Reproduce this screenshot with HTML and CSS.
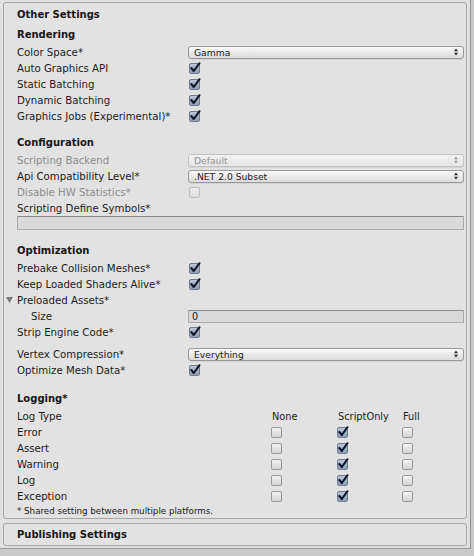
FILE: index.html
```html
<!DOCTYPE html>
<html>
<head>
<meta charset="utf-8">
<link rel="stylesheet" href="styles.css">
</head>
<body>
<div class="window">
  <section class="box other">
    <div class="row head">Other Settings</div>

    <div class="row head sec">Rendering</div>
    <div class="row"><span class="label">Color Space*</span><div class="ctrl"><div class="popup"><span>Gamma</span><svg class="arr" viewBox="0 0 4 8" width="4" height="8"><path d="M0 3.2 L2 0.5 L4 3.2Z M0 4.8 L2 7.5 L4 4.8Z"/></svg></div></div></div>
    <div class="row"><span class="label">Auto Graphics API</span><div class="ctrl"><span class="cb on"><svg viewBox="0 0 12 12"><path d="M2.3 6 L4.8 9 L10.5 1.2"/></svg></span></div></div>
    <div class="row"><span class="label">Static Batching</span><div class="ctrl"><span class="cb on"><svg viewBox="0 0 12 12"><path d="M2.3 6 L4.8 9 L10.5 1.2"/></svg></span></div></div>
    <div class="row"><span class="label">Dynamic Batching</span><div class="ctrl"><span class="cb on"><svg viewBox="0 0 12 12"><path d="M2.3 6 L4.8 9 L10.5 1.2"/></svg></span></div></div>
    <div class="row"><span class="label">Graphics Jobs (Experimental)*</span><div class="ctrl"><span class="cb on"><svg viewBox="0 0 12 12"><path d="M2.3 6 L4.8 9 L10.5 1.2"/></svg></span></div></div>

    <div class="row head sec config">Configuration</div>
    <div class="row disabled"><span class="label">Scripting Backend</span><div class="ctrl"><div class="popup off"><span>Default</span><svg class="arr" viewBox="0 0 4 8" width="4" height="8"><path d="M0 3.2 L2 0.5 L4 3.2Z M0 4.8 L2 7.5 L4 4.8Z"/></svg></div></div></div>
    <div class="row"><span class="label">Api Compatibility Level*</span><div class="ctrl"><div class="popup"><span>.NET 2.0 Subset</span><svg class="arr" viewBox="0 0 4 8" width="4" height="8"><path d="M0 3.2 L2 0.5 L4 3.2Z M0 4.8 L2 7.5 L4 4.8Z"/></svg></div></div></div>
    <div class="row disabled"><span class="label">Disable HW Statistics*</span><div class="ctrl"><span class="cb off"></span></div></div>
    <div class="row"><span class="label">Scripting Define Symbols*</span></div>
    <div class="field wide"></div>

    <div class="row head sec optim">Optimization</div>
    <div class="row"><span class="label">Prebake Collision Meshes*</span><div class="ctrl"><span class="cb on"><svg viewBox="0 0 12 12"><path d="M2.3 6 L4.8 9 L10.5 1.2"/></svg></span></div></div>
    <div class="row"><span class="label">Keep Loaded Shaders Alive*</span><div class="ctrl"><span class="cb on"><svg viewBox="0 0 12 12"><path d="M2.3 6 L4.8 9 L10.5 1.2"/></svg></span></div></div>
    <div class="row fold"><span class="tri"><svg viewBox="0 0 7 6" width="7" height="6"><path d="M0 0 L7 0 L3.5 6Z"/></svg></span><span class="label">Preloaded Assets*</span></div>
    <div class="row"><span class="label indent">Size</span><div class="ctrl"><div class="field num">0</div></div></div>
    <div class="row"><span class="label">Strip Engine Code*</span><div class="ctrl"><span class="cb on"><svg viewBox="0 0 12 12"><path d="M2.3 6 L4.8 9 L10.5 1.2"/></svg></span></div></div>
    <div class="row vc"><span class="label">Vertex Compression*</span><div class="ctrl"><div class="popup"><span>Everything</span><svg class="arr" viewBox="0 0 4 8" width="4" height="8"><path d="M0 3.2 L2 0.5 L4 3.2Z M0 4.8 L2 7.5 L4 4.8Z"/></svg></div></div></div>
    <div class="row"><span class="label">Optimize Mesh Data*</span><div class="ctrl"><span class="cb on"><svg viewBox="0 0 12 12"><path d="M2.3 6 L4.8 9 L10.5 1.2"/></svg></span></div></div>

    <div class="row head sec logging">Logging*</div>
    <div class="logrow"><span>Log Type</span><span class="colh">None</span><span class="colh">ScriptOnly</span><span class="colh">Full</span></div>
    <div class="logrow"><span>Error</span><span class="cb"></span><span class="cb on"><svg viewBox="0 0 12 12"><path d="M2.3 6 L4.8 9 L10.5 1.2"/></svg></span><span class="cb"></span></div>
    <div class="logrow"><span>Assert</span><span class="cb"></span><span class="cb on"><svg viewBox="0 0 12 12"><path d="M2.3 6 L4.8 9 L10.5 1.2"/></svg></span><span class="cb"></span></div>
    <div class="logrow"><span>Warning</span><span class="cb"></span><span class="cb on"><svg viewBox="0 0 12 12"><path d="M2.3 6 L4.8 9 L10.5 1.2"/></svg></span><span class="cb"></span></div>
    <div class="logrow"><span>Log</span><span class="cb"></span><span class="cb on"><svg viewBox="0 0 12 12"><path d="M2.3 6 L4.8 9 L10.5 1.2"/></svg></span><span class="cb"></span></div>
    <div class="logrow"><span>Exception</span><span class="cb"></span><span class="cb on"><svg viewBox="0 0 12 12"><path d="M2.3 6 L4.8 9 L10.5 1.2"/></svg></span><span class="cb"></span></div>
    <div class="note">* Shared setting between multiple platforms.</div>
  </section>

  <section class="box publishing">
    <div class="row head">Publishing Settings</div>
  </section>
</div>
</body>
</html>
```

FILE: styles.css
```css
html, body {
  margin: 0;
  padding: 0;
}
body {
  background: #c9c9c9;
  font-family: "DejaVu Sans", "Verdana", sans-serif;
  font-size: 10.2px;
  color: #1c1c1c;
}
.window {
  width: 471px;
  height: 549px;
  box-sizing: border-box;
  background: #e0e0e0;
  border-right: 1px solid #8f8f8f;
  border-bottom: 1px solid #9c9c9c;
  padding: 2px 0 0 3px;
}
.box {
  width: 464px;
  box-sizing: border-box;
  border: 1px solid #a6a6a6;
  border-radius: 3px;
  background: #e2e2e2;
  padding: 3px 2px 0 13px;
}
.publishing {
  margin-top: 4px;
  padding-top: 2px;
  padding-bottom: 3px;
}
.row {
  display: flex;
  align-items: center;
  height: 16px;
  white-space: nowrap;
}
.head {
  font-weight: bold;
  font-size: 10px;
  color: #161616;
}
.sec {
  margin-top: 4px;
  margin-bottom: 2px;
}
.config { margin-top: 10px; }
.optim { margin-top: 12px; }
.logging { margin-top: 12px; }
.vc { margin-top: 6px; }
.label {
  width: 171px;
  flex: none;
  box-sizing: border-box;
}
.label.indent { padding-left: 14px; }
.ctrl {
  flex: 1;
  display: flex;
  align-items: center;
  min-width: 0;
}
.disabled { color: #8d8d8d; }

.fold { margin-left: -11px; }
.tri {
  width: 11px;
  flex: none;
  display: flex;
  align-items: center;
}
.tri svg { fill: #7a7a7a; }

.popup {
  flex: 1;
  height: 13px;
  box-sizing: border-box;
  border: 1px solid #999999;
  border-radius: 3px;
  background: linear-gradient(#fbfbfb, #e6e6e6 60%, #dcdcdc);
  display: flex;
  align-items: center;
  justify-content: space-between;
  padding: 0 5px 0 5px;
  font-size: 9.2px;
  color: #1a1a1a;
  box-shadow: 0 1px 0 rgba(0,0,0,0.06);
}
.popup.off {
  border-color: #c2c2c2;
  color: #959595;
  background: linear-gradient(#f2f2f2, #e6e6e6);
}
.arr { fill: #2a2a2a; }
.popup.off .arr { fill: #9a9a9a; }

.cb {
  width: 11px;
  height: 11px;
  box-sizing: border-box;
  border: 1px solid #9a9a9a;
  border-radius: 2px;
  background: linear-gradient(#f4f4f4, #d4d4d4);
  margin-left: 1px;
  display: block;
  position: relative;
}
.cb.off {
  border-color: #bdbdbd;
  background: linear-gradient(#ececec, #dcdcdc);
}
.cb.on {
  border-color: #6f7c8e;
  background: linear-gradient(#bac6d6, #8d9db4);
}
.cb svg {
  position: absolute;
  left: -1px;
  top: -2px;
  width: 12px;
  height: 12px;
  fill: none;
  stroke: #0c1122;
  stroke-width: 2;
  stroke-linecap: round;
  stroke-linejoin: round;
}

.field {
  box-sizing: border-box;
  border: 1px solid #a9a9a9;
  border-top-color: #8a8a8a;
  border-radius: 1px;
  background: #d9d9d9;
}
.field.wide {
  height: 14px;
  width: 447px;
}
.field.num {
  flex: 1;
  height: 13px;
  display: flex;
  align-items: center;
  padding-left: 3px;
  font-size: 9.6px;
}

.logrow {
  display: grid;
  grid-template-columns: 254px 66px 65px 1fr;
  align-items: center;
  height: 16px;
  white-space: nowrap;
}
.logrow .cb { margin-left: 0; }
.colh {
  font-size: 9.8px;
  padding-left: 1px;
}
.note {
  height: 14px;
  display: flex;
  align-items: center;
  font-size: 8.7px;
  color: #202020;
  white-space: nowrap;
}
```
